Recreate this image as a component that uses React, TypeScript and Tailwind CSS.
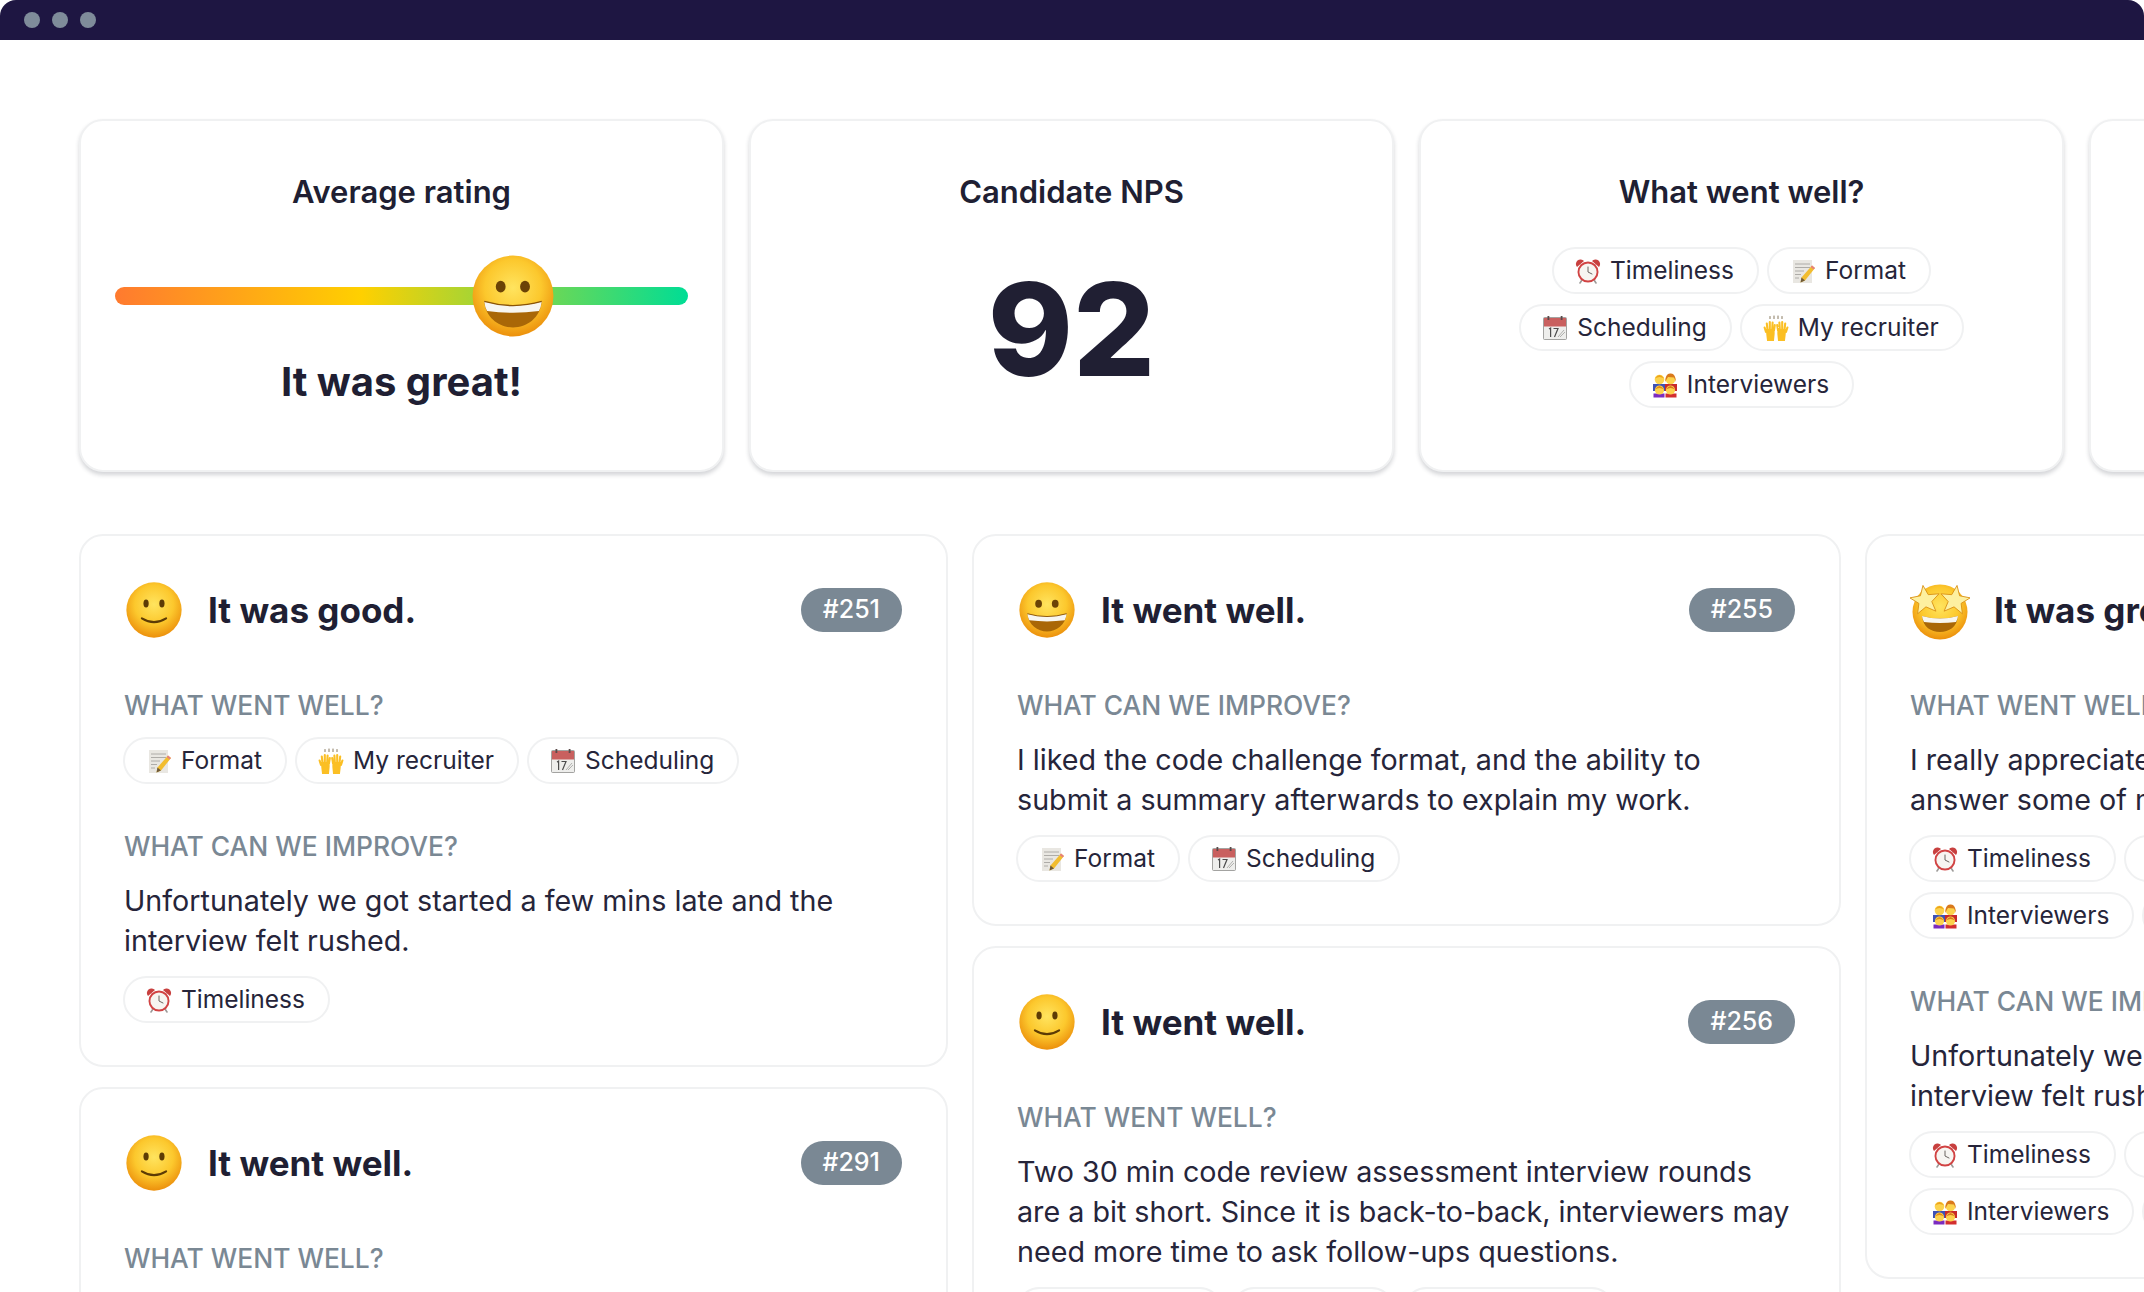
import { useId } from "react";

type Emoji = "clock" | "memo" | "calendar" | "hands" | "family";

const tagLabels: Record<Emoji, string> = {
  clock: "Timeliness",
  memo: "Format",
  calendar: "Scheduling",
  hands: "My recruiter",
  family: "Interviewers",
};

function FaceBase({ id, cy = 30, r = 29.6 }: { id: string; cy?: number; r?: number }) {
  return (
    <>
      <defs>
        <radialGradient id={id} cx="50%" cy="40%" r="60%">
          <stop offset="0%" stopColor="#ffe45f" />
          <stop offset="58%" stopColor="#fcc82d" />
          <stop offset="100%" stopColor="#ec900c" />
        </radialGradient>
      </defs>
      <circle cx="30" cy={cy} r={r} fill={`url(#${id})`} />
    </>
  );
}

function GrinFace({ className }: { className: string }) {
  const id = useId();
  return (
    <svg viewBox="0 0 60 60" className={className}>
      <FaceBase id={id} />
      <ellipse cx="21" cy="23.2" rx="3.6" ry="4.3" fill="#6b4306" />
      <ellipse cx="38.8" cy="23.2" rx="3.6" ry="4.3" fill="#6b4306" />
      <path d="M9 34 Q30 40 51 34 C50 46 40 53 30 53 C20 53 10 46 9 34Z" fill="#a96707" />
      <path d="M9 34 Q30 40 51 34 Q50.6 38 49 41 Q30 43.5 11 41 Q9.4 38 9 34Z" fill="#f7f6f1" />
      <path d="M9 34 Q30 40 51 34" fill="none" stroke="#8a5405" strokeWidth="1" />
    </svg>
  );
}

function SmileFace({ className }: { className: string }) {
  const id = useId();
  return (
    <svg viewBox="0 0 60 60" className={className}>
      <FaceBase id={id} />
      <ellipse cx="21.5" cy="23" rx="2.8" ry="4.2" fill="#5d3b05" />
      <ellipse cx="38.5" cy="23" rx="2.8" ry="4.2" fill="#5d3b05" />
      <path d="M17 39 Q30 47 43 39" fill="none" stroke="#5d3b05" strokeWidth="2.2" strokeLinecap="round" />
    </svg>
  );
}

function StarFace({ className }: { className: string }) {
  const id = useId();
  const star = "M0 -14 L3.8 -4.6 L14 -4 L6.2 2.4 L8.8 12 L0 6.6 L-8.8 12 L-6.2 2.4 L-14 -4 L-3.8 -4.6Z";
  return (
    <svg viewBox="0 0 60 60" className={className}>
      <FaceBase id={id} cy={32} r={27.5} />
      <path d="M12 36 Q30 41 48 36 C47 47 39 52 30 52 C21 52 13 47 12 36Z" fill="#a96707" />
      <path d="M12 36 Q30 41 48 36 Q47.6 39.5 46 42 Q30 44 14 42 Q12.4 39.5 12 36Z" fill="#f7f6f1" />
      <path d={star} transform="translate(15 20) scale(1.05) rotate(-8)" fill="#fdf0a0" stroke="#d98f12" strokeWidth="0.8" />
      <path d={star} transform="translate(45 20) scale(1.05) rotate(8)" fill="#fdf0a0" stroke="#d98f12" strokeWidth="0.8" />
    </svg>
  );
}

function ClockIcon() {
  return (
    <svg viewBox="0 0 26 26" className="h-[26px] w-[26px] shrink-0">
      <path d="M2 9 A4.6 4.6 0 0 1 9 3Z" fill="#c8403f" />
      <path d="M24 9 A4.6 4.6 0 0 0 17 3Z" fill="#c8403f" />
      <path d="M7 22 L5 25 M19 22 L21 25" stroke="#9c9a98" strokeWidth="1.6" strokeLinecap="round" />
      <circle cx="13" cy="14" r="10.5" fill="#d14343" />
      <circle cx="13" cy="14" r="8.6" fill="#f7f5f1" />
      <path d="M13 9 V14 L17 16" fill="none" stroke="#6a6460" strokeWidth="1" strokeLinecap="round" />
    </svg>
  );
}

function MemoIcon() {
  return (
    <svg viewBox="0 0 26 26" className="h-[26px] w-[26px] shrink-0">
      <rect x="3" y="2" width="19" height="23" fill="#e9e7e2" />
      <path d="M5 6 H20 M5 9.5 H20 M5 13 H14 M5 16.5 H11 M5 20 H9" stroke="#a7a5a1" strokeWidth="0.9" />
      <path d="M22 7.5 L25 10 L15 22.5 L10.5 24.5 L11.5 19.5Z" fill="#f2bd2f" />
      <path d="M10.5 24.5 L11.5 19.5 L15 22.5Z" fill="#6f5a3a" />
      <path d="M22 7.5 L25 10 L23.7 11.6 L20.7 9.1Z" fill="#e67f7f" />
    </svg>
  );
}

function CalendarIcon() {
  return (
    <svg viewBox="0 0 26 26" className="h-[26px] w-[26px] shrink-0">
      <rect x="1.5" y="2.5" width="23" height="22" rx="1" fill="#eeeeec" stroke="#8e8e8c" strokeWidth="0.8" />
      <rect x="2" y="3" width="22" height="8.5" fill="#c9605f" />
      <rect x="5.5" y="1" width="1.8" height="4" fill="#5a4b4a" />
      <rect x="18.7" y="1" width="1.8" height="4" fill="#5a4b4a" />
      <path d="M7 14 L8.6 13 V22 M11.5 13.5 H16 L12.5 22" fill="none" stroke="#4c4c4c" strokeWidth="1.2" />
      <path d="M16 22 L22 15 M18 22 L23 17" fill="none" stroke="#a9a9a7" strokeWidth="0.9" />
    </svg>
  );
}

function HandsIcon() {
  const hand = (
    <g stroke="#fbbf24" strokeLinecap="round" strokeWidth="2.1" fill="none">
      <path d="M4.5 15 L3.8 8.5 M6.8 14 L6.8 7 M9.2 14 L9.6 7.5 M11 15 L11.8 10 M3 17 L1.6 12.5" />
      <path d="M4 15 H10.6 V19 L10 25 H5 L4.4 20Z" fill="#fbbf24" />
    </g>
  );
  return (
    <svg viewBox="0 0 26 26" className="h-[26px] w-[26px] shrink-0">
      {hand}
      <g transform="translate(26 0) scale(-1 1)">{hand}</g>
      <path d="M7 1.5 V3.6 M11 1 V3.6 M15 1 V3.6 M19 1.5 V3.6" stroke="#7a6a4c" strokeWidth="0.9" strokeLinecap="round" />
    </svg>
  );
}

function FamilyIcon() {
  return (
    <svg viewBox="0 0 26 26" className="h-[26px] w-[26px] shrink-0">
      <rect x="1" y="12" width="12" height="7" fill="#3f51b5" />
      <rect x="13" y="12" width="12" height="7" fill="#c92a2a" />
      <circle cx="7.5" cy="7.5" r="4.8" fill="#fcd34d" />
      <path d="M2.8 6.5 Q7.5 -0.5 12.2 6.5 Q7.5 3.5 2.8 6.5Z" fill="#eda31c" />
      <circle cx="18.5" cy="7.5" r="4.8" fill="#fcd34d" />
      <path d="M13 10 Q13.5 1 18.5 1.5 Q23.5 1 24 10 L22 5.5 L16 5Z" fill="#d9791c" />
      <rect x="1.5" y="21.5" width="11" height="4" fill="#7b2cbf" />
      <rect x="13.5" y="21.5" width="11" height="4" fill="#d32f2f" />
      <circle cx="7.5" cy="18" r="4.6" fill="#fcd34d" />
      <path d="M3 17.5 Q7.5 10.5 12 17.5 Q7.5 14.5 3 17.5Z" fill="#e68a12" />
      <circle cx="18.5" cy="18" r="4.6" fill="#fcd34d" />
      <path d="M14 17.5 Q18.5 10.5 23 17.5 Q18.5 14.5 14 17.5Z" fill="#d9791c" />
    </svg>
  );
}

function TagIcon({ name }: { name: Emoji }) {
  if (name === "clock") return <ClockIcon />;
  if (name === "memo") return <MemoIcon />;
  if (name === "calendar") return <CalendarIcon />;
  if (name === "hands") return <HandsIcon />;
  return <FamilyIcon />;
}

function Tag({ name }: { name: Emoji }) {
  return (
    <span className="flex h-[47px] shrink-0 items-center gap-[9px] rounded-full border-2 border-[#f0f1f2] bg-white pr-[23px] pl-[21px] text-[24.5px] text-[#26253a]">
      <TagIcon name={name} />
      {tagLabels[name]}
    </span>
  );
}

function TagRow({ tags, className }: { tags: Emoji[]; className: string }) {
  return (
    <div className={`-ml-px flex flex-wrap gap-x-2 gap-y-[10px] ${className}`}>
      {tags.map((tag) => (
        <Tag key={tag} name={tag} />
      ))}
    </div>
  );
}

function StatCard({ title, children }: { title: string; children: React.ReactNode }) {
  return (
    <div className="flex h-[353px] w-[645px] shrink-0 flex-col items-center rounded-3xl border-2 border-[#f0f1f2] bg-white px-[34px] pt-[49px] shadow-[0_3px_4px_rgba(40,44,60,0.2)]">
      {title && <h2 className="text-[31px] leading-[44px] font-semibold text-[#201f33]">{title}</h2>}
      {children}
    </div>
  );
}

function Label({ children }: { children: React.ReactNode }) {
  return <h4 className="text-[26.4px] leading-[36px] font-medium text-[#7a8894]">{children}</h4>;
}

function Body({ children }: { children: React.ReactNode }) {
  return <p className="mt-[17px] text-[28.7px] leading-10 text-[#26253a]">{children}</p>;
}

function ReviewCard({
  face,
  title,
  id,
  children,
}: {
  face: React.ReactNode;
  title: string;
  id: string;
  children: React.ReactNode;
}) {
  return (
    <div className="w-[869px] shrink-0 rounded-3xl border-2 border-[#f0f1f2] bg-white pt-[46px] pr-[44px] pb-[42px] pl-[43px]">
      <div className="flex h-14 items-center">
        <span className="flex w-[60px] justify-center">{face}</span>
        <h3 className="ml-6 flex-1 text-[35px] font-bold whitespace-nowrap text-[#201f33]">{title}</h3>
        <span className="flex h-[44px] items-center rounded-full bg-[#7a8894] px-[22px] text-[25px] font-medium text-white">{id}</span>
      </div>
      {children}
    </div>
  );
}

const smile = <SmileFace className="h-14 w-14" />;
const grin = <GrinFace className="h-14 w-14" />;

export default function App() {
  return (
    <div className="h-[1292px] w-[2144px] overflow-hidden bg-white font-['Inter',sans-serif]">
      <div className="flex h-10 items-center gap-3 rounded-t-2xl bg-[#1e1642] pl-6">
        <span className="h-4 w-4 rounded-full bg-[#7f8c9a]" />
        <span className="h-4 w-4 rounded-full bg-[#7f8c9a]" />
        <span className="h-4 w-4 rounded-full bg-[#7f8c9a]" />
      </div>

      <div className="pt-[79px] pl-[79px]">
        <div className="flex gap-[25px]">
          <StatCard title="Average rating">
            <div className="relative mt-[73px] h-[18px] w-[573px] rounded-full bg-[linear-gradient(90deg,#ff7a2f_0%,#ffd000_43%,#00dd95_100%)]">
              <GrinFace className="absolute top-[-32px] left-[357px] h-[82px] w-[82px]" />
            </div>
            <p className="mt-[53px] text-[40px] leading-[48px] font-bold text-[#201f33]">It was great!</p>
          </StatCard>
          <StatCard title="Candidate NPS">
            <p className="mt-[45px] text-[129px] leading-[140px] font-extrabold text-[#201f33]">92</p>
          </StatCard>
          <StatCard title="What went well?">
            <div className="mt-[33px] flex flex-wrap justify-center gap-x-2 gap-y-[10px] px-[40px]">
              <Tag name="clock" />
              <Tag name="memo" />
              <Tag name="calendar" />
              <Tag name="hands" />
              <Tag name="family" />
            </div>
          </StatCard>
          <StatCard title="">
            <span />
          </StatCard>
        </div>

        <div className="mt-[62px] flex items-start gap-6">
          <div className="flex shrink-0 flex-col gap-5">
            <ReviewCard face={smile} title="It was good." id="#251">
              <div className="mt-[49px]">
                <Label>WHAT WENT WELL?</Label>
              </div>
              <TagRow tags={["memo", "hands", "calendar"]} className="mt-[14px]" />
              <div className="mt-[44px]">
                <Label>WHAT CAN WE IMPROVE?</Label>
              </div>
              <Body>
                Unfortunately we got started a few mins late and the interview felt rushed.
              </Body>
              <TagRow tags={["clock"]} className="mt-[15px]" />
            </ReviewCard>
            <ReviewCard face={smile} title="It went well." id="#291">
              <div className="mt-[49px]">
                <Label>WHAT WENT WELL?</Label>
              </div>
            </ReviewCard>
          </div>

          <div className="flex shrink-0 flex-col gap-5">
            <ReviewCard face={grin} title="It went well." id="#255">
              <div className="mt-[49px]">
                <Label>WHAT CAN WE IMPROVE?</Label>
              </div>
              <Body>
                I liked the code challenge format, and the ability to submit a summary afterwards to explain my work.
              </Body>
              <TagRow tags={["memo", "calendar"]} className="mt-[15px]" />
            </ReviewCard>
            <ReviewCard face={smile} title="It went well." id="#256">
              <div className="mt-[49px]">
                <Label>WHAT WENT WELL?</Label>
              </div>
              <Body>
                Two 30 min code review assessment interview rounds are a bit short. Since it is back-to-back, interviewers may need more time to ask follow-ups questions.
              </Body>
              <TagRow tags={["clock", "memo", "calendar"]} className="mt-[15px]" />
            </ReviewCard>
          </div>

          <ReviewCard face={<StarFace className="h-[60px] w-[60px]" />} title="It was great!" id="#260">
            <div className="mt-[49px]">
              <Label>WHAT WENT WELL?</Label>
            </div>
            <Body>
              I really appreciated having time to
              <br />
              answer some of my questions.
            </Body>
            <TagRow tags={["clock", "hands", "calendar", "family", "memo"]} className="mt-[15px]" />
            <div className="mt-[44px]">
              <Label>WHAT CAN WE IMPROVE?</Label>
            </div>
            <Body>
              Unfortunately we got started a few mins late and the interview felt rushed.
            </Body>
            <TagRow tags={["clock", "hands", "calendar", "family", "memo"]} className="mt-[15px]" />
          </ReviewCard>
        </div>
      </div>
    </div>
  );
}
